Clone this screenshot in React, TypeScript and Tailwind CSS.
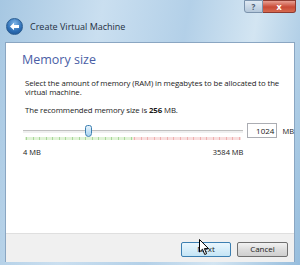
import React from 'react';

const ticks = Array.from({ length: 34 }, (_, i) => i);

export default function App() {
  return (
    <div
      className="relative w-[300px] h-[265px] overflow-hidden flex flex-col bg-[linear-gradient(100deg,#a6c7e2_0%,#cadff0_30%,#b3d0e8_55%,#d3e5f2_75%,#96bddd_100%)]"
      style={{ fontFamily: '"Open Sans", "Noto Sans", sans-serif' }}
    >
      {/* caption buttons */}
      <div className="flex justify-end h-[13px] pr-[4px]">
        <div className="w-[19px] h-[13px] rounded-bl-[3px] border border-[#7b93ad] bg-[linear-gradient(#dfe9f3,#b4c7da)] flex items-center justify-center text-[8px] leading-none font-bold text-[#4a5a6e]">
          ?
        </div>
        <div className="w-[33px] h-[13px] rounded-br-[3px] border border-[#8d3a30] border-l-0 bg-[linear-gradient(#e8a093,#c94a36_55%,#d66a50)] flex items-center justify-center text-[9px] leading-none font-bold text-white">
          x
        </div>
      </div>

      {/* back + title */}
      <div className="flex items-center h-[29px] pl-[6px] pb-[2px]">
        <div className="w-[17px] h-[17px] rounded-full border border-[#2a5d92] bg-[radial-gradient(circle_at_50%_30%,#7fb6e8,#2c6db4_60%,#1d4f8d)] flex items-center justify-center">
          <svg width="11" height="9" viewBox="0 0 11 9">
            <path d="M1 4.5 L5 0.8 L5 3 L10 3 L10 6 L5 6 L5 8.2 Z" fill="#ffffff" />
          </svg>
        </div>
        <span className="ml-[7px] text-[9px] text-[#1f2f3f]">Create Virtual Machine</span>
      </div>

      {/* dialog body */}
      <div className="mx-[5px] flex flex-col border border-[#8aa6c2] border-b-0">
        <div className="h-[190px] bg-white pl-[16px] pt-[9px]">
          <div className="text-[12.5px] leading-[15px] text-[#4a5ea6]">Memory size</div>
          <p className="mt-[12px] ml-[3px] w-[262px] text-[7.8px] leading-[9px] tracking-[-0.1px] text-[#1a1a1a]">
            Select the amount of memory (RAM) in megabytes to be allocated to the virtual machine.
          </p>
          <p className="mt-[9px] ml-[3px] text-[7.8px] leading-[9px] tracking-[-0.1px] text-[#1a1a1a]">
            The recommended memory size is <span className="font-bold">256</span> MB.
          </p>

          <div className="mt-[9px] flex items-start">
            <div className="w-[221px] ml-[1px] flex flex-col">
              <div className="relative h-[14px] flex items-center">
                <div className="w-full h-[3px] border-t border-[#c0c0c0] bg-[#efefef]" />
                <div className="absolute left-[62px] top-[1px] w-[7px] h-[12px] rounded-[3px] rounded-b-[4px] border border-[#3c7fb1] bg-[linear-gradient(#e6f3fc,#a9d4f1)]" />
              </div>
              <div className="flex h-[3px] mx-[2px] mt-[-1px]">
                <div className="w-[108px] h-[3px] bg-[#e0f3d6] flex justify-between px-[1px]">
                  {ticks.slice(0, 17).map((i) => (
                    <div key={i} className="w-[1px] h-[3px] bg-[#a8d69a]" />
                  ))}
                </div>
                <div className="w-[108px] h-[3px] bg-[#f9dede] flex justify-between px-[1px]">
                  {ticks.slice(17).map((i) => (
                    <div key={i} className="w-[1px] h-[3px] bg-[#eeb0b0]" />
                  ))}
                </div>
              </div>
              <div className="flex justify-between mt-[8px] text-[7.5px] leading-[9px] text-[#1a1a1a]">
                <span>4 MB</span>
                <span>3584 MB</span>
              </div>
            </div>
            <div className="ml-[4px] mt-[-1px] w-[30px] h-[15px] border border-[#abadb3] bg-white flex items-center justify-end pr-[2px] text-[8px] text-[#1a1a1a]">
              1024
            </div>
            <span className="ml-[5px] text-[7.5px] leading-[14px] text-[#1a1a1a]">MB</span>
          </div>
        </div>

        <div className="h-[29px] bg-[#f0f0f0] border-t border-[#dfdfdf] flex items-center justify-end pr-[6px] gap-[6px] pt-[2px]">
          <div className="w-[50px] h-[15px] rounded-[2px] border border-[#3c7fb1] bg-[linear-gradient(#eaf6fd,#c4e5f6)] flex items-center justify-center text-[8px] text-[#1a1a1a]">
            Next
          </div>
          <div className="w-[51px] h-[15px] rounded-[2px] border border-[#707070] bg-[linear-gradient(#f2f2f2,#dddddd_50%,#cfcfcf)] flex items-center justify-center text-[8px] text-[#1a1a1a]">
            Cancel
          </div>
        </div>
      </div>

      {/* mouse pointer */}
      <svg className="absolute left-[199px] top-[239px]" width="11" height="17" viewBox="0 0 11 17">
        <path d="M0.5 0.5 L0.5 13 L3.5 10.2 L5.7 15.5 L7.6 14.7 L5.4 9.6 L9.5 9.6 Z" fill="#ffffff" stroke="#000000" strokeWidth="1" />
      </svg>
    </div>
  );
}
